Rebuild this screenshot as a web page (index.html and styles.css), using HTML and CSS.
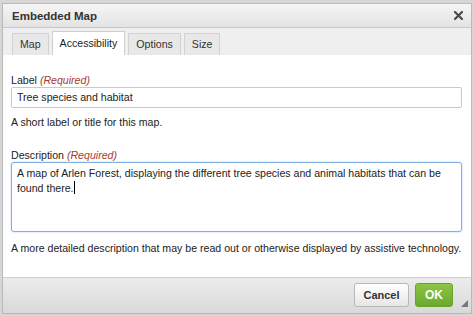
FILE: index.html
```html
<!DOCTYPE html>
<html>
<head>
<meta charset="utf-8">
<link rel="stylesheet" href="styles.css">
</head>
<body>
<div class="dialog">
  <div class="titlebar">
    <span class="title">Embedded Map</span>
    <svg class="close" width="9" height="9" viewBox="0 0 9 9"><path d="M1 1L8 8M8 1L1 8" stroke="#4a4a4a" stroke-width="2.2" stroke-linecap="square"/></svg>
  </div>
  <div class="tabbar">
    <div class="tab">Map</div>
    <div class="tab active">Accessibility</div>
    <div class="tab">Options</div>
    <div class="tab">Size</div>
  </div>
  <div class="content">
    <div class="field">
      <div class="label">Label <em class="req">(Required)</em></div>
      <div class="input">Tree species and habitat</div>
      <div class="help">A short label or title for this map.</div>
    </div>
    <div class="field">
      <div class="label">Description <em class="req">(Required)</em></div>
      <div class="textarea">A map of Arlen Forest, displaying the different tree species and animal habitats that can be found there.<span class="caret"></span></div>
      <div class="help help-wide">A more detailed description that may be read out or otherwise displayed by assistive technology.</div>
    </div>
  </div>
  <div class="footer">
    <div class="btn cancel">Cancel</div>
    <div class="btn ok">OK</div>
    <div class="grip"></div>
  </div>
</div>
</body>
</html>
```
FILE: styles.css
```css
html, body {
  margin: 0;
  padding: 0;
}
body {
  background: #d6d6d6;
  font-family: "Liberation Sans", Arial, sans-serif;
  font-size: 10.6px;
  color: #222;
  width: 474px;
  height: 316px;
  overflow: hidden;
}
.dialog {
  margin: 3px 2px 0 2px;
  width: 468px;
  height: 309px;
  border: 1px solid #b9b9b9;
  background: #fff;
  display: flex;
  flex-direction: column;
}
.titlebar {
  height: 23px;
  flex: none;
  background: linear-gradient(#f5f5f5, #e3e3e3);
  border-bottom: 1px solid #c8c8c8;
  display: flex;
  align-items: center;
  justify-content: space-between;
  padding: 0 8px 0 9px;
}
.title {
  font-weight: bold;
  font-size: 11.5px;
  color: #333;
}
.close {
  display: block;
}
.tabbar {
  height: 27px;
  flex: none;
  background: #efefef;
  display: flex;
  align-items: flex-end;
  gap: 3px;
  padding: 0 0 0 9px;
}
.tab {
  height: 21px;
  line-height: 21px;
  padding: 0 7px;
  background: #e8e8e8;
  border: 1px solid #d2d2d2;
  border-bottom: none;
  color: #333;
}
.tab.active {
  background: #fff;
  height: 23px;
  line-height: 23px;
  border-color: #cfcfcf;
  color: #222;
}
.content {
  flex: 1;
  padding: 18px 9px 0 8px;
  display: flex;
  flex-direction: column;
  gap: 19px;
}
.label {
  line-height: 14px;
}
.req {
  color: #a33a32;
}
.input {
  height: 19px;
  border: 1px solid #c9c9c9;
  border-radius: 2px;
  line-height: 19px;
  padding: 0 5px;
}
.help {
  margin-top: 7px;
  line-height: 14px;
}
.help-wide {
  margin-top: 9px;
  white-space: nowrap;
}
.textarea {
  height: 62px;
  border: 1px solid #7fb0e0;
  border-radius: 3px;
  box-shadow: 0 0 2px rgba(102, 160, 233, 0.6);
  padding: 3px 5px;
  line-height: 15px;
}
.caret {
  display: inline-block;
  width: 1px;
  height: 13px;
  background: #000;
  vertical-align: -2px;
}
.footer {
  height: 34px;
  flex: none;
  border-top: 1px solid #cfcfcf;
  background: linear-gradient(#ececec, #d9d9d9);
  display: flex;
  align-items: center;
  justify-content: flex-end;
  gap: 6px;
  padding: 0 9px 1px 0;
  position: relative;
}
.btn {
  height: 22px;
  line-height: 22px;
  border-radius: 3px;
  font-weight: bold;
  font-size: 11px;
  text-align: center;
}
.cancel {
  width: 53px;
  border: 1px solid #b8b8b8;
  background: linear-gradient(#ffffff, #e6e6e6);
  color: #333;
}
.ok {
  width: 36px;
  border: 1px solid #6aa22e;
  background: linear-gradient(#8cc444, #6ba92c);
  color: #fff;
  font-size: 12px;
  margin-right: 9px;
}
.grip {
  position: absolute;
  right: 3px;
  bottom: 6px;
  width: 0;
  height: 0;
  border-left: 7px solid transparent;
  border-bottom: 7px solid #777;
}
```
